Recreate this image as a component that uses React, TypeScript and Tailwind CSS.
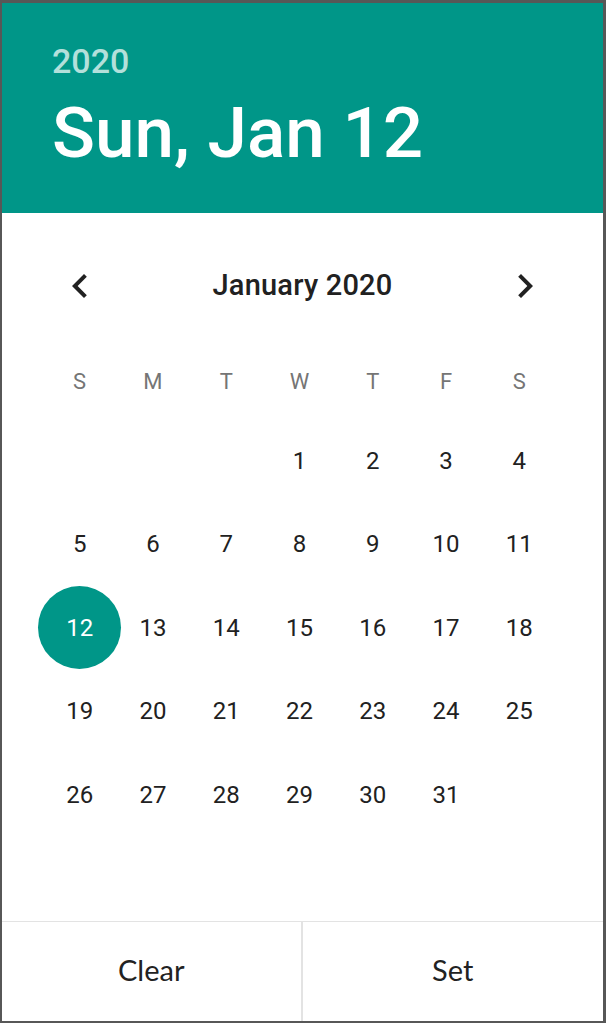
import React from "react";

const TEAL = "bg-[#009688]";

const weekdays = ["S", "M", "T", "W", "T", "F", "S"];

// January 2020 starts on a Wednesday
const weeks: (number | null)[][] = [
  [null, null, null, 1, 2, 3, 4],
  [5, 6, 7, 8, 9, 10, 11],
  [12, 13, 14, 15, 16, 17, 18],
  [19, 20, 21, 22, 23, 24, 25],
  [26, 27, 28, 29, 30, 31, null],
];

const SELECTED = 12;

function ChevronLeft() {
  return (
    <svg width="48" height="48" viewBox="0 0 24 24" fill="#212121">
      <path d="M15.41 7.41L14 6l-6 6 6 6 1.41-1.41L10.83 12z" />
    </svg>
  );
}

function ChevronRight() {
  return (
    <svg width="48" height="48" viewBox="0 0 24 24" fill="#212121">
      <path d="M8.59 16.59L10 18l6-6-6-6-1.41 1.41L13.17 12z" />
    </svg>
  );
}

export default function App() {
  return (
    <div
      className="w-[606px] h-[1023px] flex flex-col bg-white border-[#575757] border-t-[3px] border-l-2 border-b-2 border-r-[3px] overflow-hidden"
      style={{ fontFamily: "Roboto, 'Noto Sans', sans-serif" }}
    >
      {/* Title bar with year and the chosen date */}
      <div className={`${TEAL} h-[210px] shrink-0 pl-[50px] pt-[41px] text-white`}>
        <div className="text-[34px] leading-[34px] font-medium text-[#b3e0db]">2020</div>
        <div className="mt-[19px] text-[71px] leading-[71px] font-medium">Sun, Jan 12</div>
      </div>

      {/* Month navigation */}
      <div className="mt-[49px] h-[48px] flex items-center justify-between px-[54px]">
        <button className="w-[48px] h-[48px] flex items-center justify-center">
          <ChevronLeft />
        </button>
        <div className="text-[29px] font-medium text-[#212121] tracking-[0.2px]">January 2020</div>
        <button className="w-[48px] h-[48px] flex items-center justify-center">
          <ChevronRight />
        </button>
      </div>

      {/* Weekday labels */}
      <div className="mt-[33px] ml-[41px] w-[513px] grid grid-cols-7 h-[76px] items-center">
        {weekdays.map((d, i) => (
          <div key={i} className="text-center text-[22px] text-[#757575]">
            {d}
          </div>
        ))}
      </div>

      {/* Day grid */}
      <div className="ml-[41px] w-[513px]">
        {weeks.map((week, wi) => (
          <div key={wi} className="grid grid-cols-7 h-[83.5px]">
            {week.map((day, di) => (
              <div key={di} className="flex items-center justify-center">
                {day === SELECTED ? (
                  <div className="shrink-0 w-[83px] h-[83px] rounded-full bg-[#009688] flex items-center justify-center text-[24px] text-white">
                    {day}
                  </div>
                ) : day ? (
                  <span className="text-[24px] text-[#212121]">{day}</span>
                ) : null}
              </div>
            ))}
          </div>
        ))}
      </div>

      {/* Actions */}
      <div className="mt-auto h-[100px] shrink-0 border-t border-[#e3e3e3] grid grid-cols-2">
        <button
          className="border-r-2 border-[#e3e3e3] pb-[3px] text-[29px] text-[#222]"
          style={{ fontFamily: "Lato, 'Open Sans', sans-serif" }}
        >
          Clear
        </button>
        <button
          className="pb-[3px] text-[29px] text-[#222]"
          style={{ fontFamily: "Lato, 'Open Sans', sans-serif" }}
        >
          Set
        </button>
      </div>
    </div>
  );
}
